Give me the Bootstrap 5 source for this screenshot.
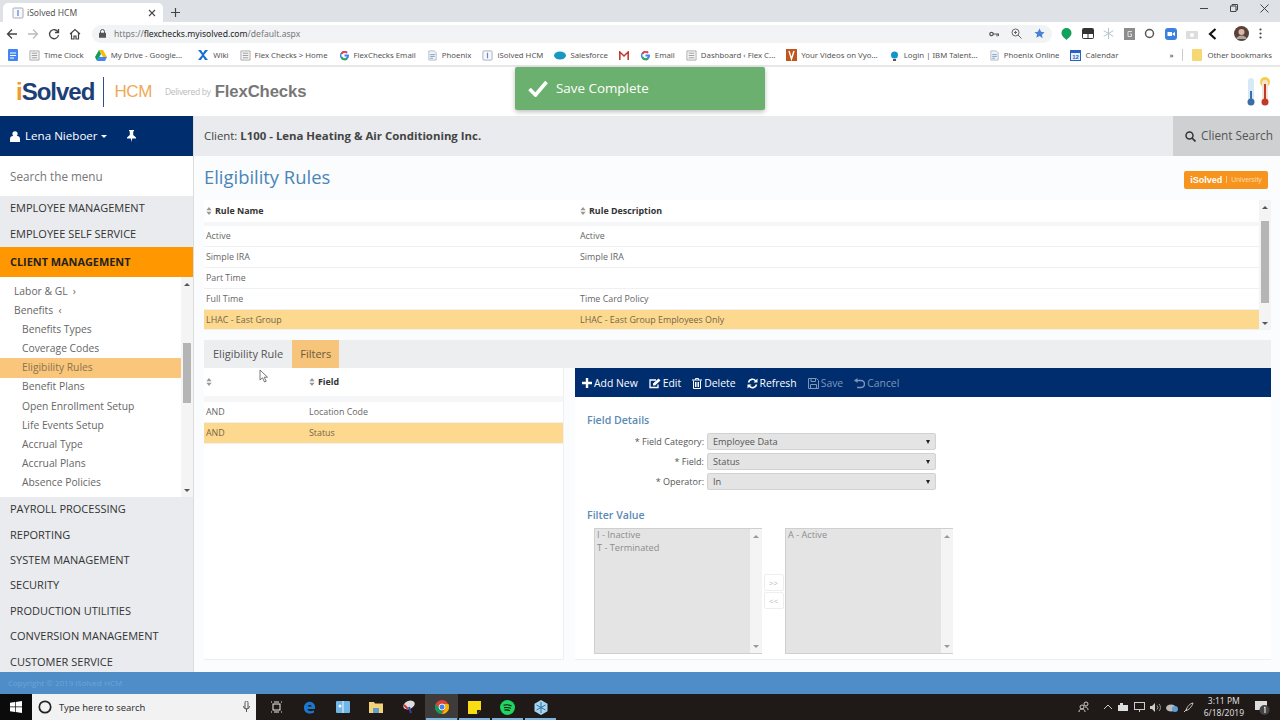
<!DOCTYPE html>
<html lang="en">
<head>
<meta charset="UTF-8">
<title>iSolved HCM</title>
<link href="https://cdn.jsdelivr.net/npm/bootstrap@5.3.3/dist/css/bootstrap.min.css" rel="stylesheet">
<style>
html, body { height: 720px; overflow: hidden; }
body { width: 1280px; font-family: "Open Sans", "Liberation Sans", sans-serif; color: #555; background: #fff; position: relative; }
svg { display: block; flex: none; }

/* browser chrome */
.tabstrip { height: 22px; background: #dee1e6; color: #444; font: 8.5px "Noto Sans", sans-serif; }
.br-tab { width: 160px; height: 19px; margin: 3px 0 0 3px; background: #fff; border-radius: 5px 5px 0 0; padding: 0 7px 0 9px; }
.br-tab .tab-name { margin-left: 3px; flex: 1; color: #555; }
.win-btns { gap: 22px; margin-left: auto; padding-right: 11px; margin-top: -6px; }
.toolbar { height: 23px; background: #fff; }
.nav-icons { width: 92px; padding-left: 6px; gap: 9px; }
.omnibox { width: 960px; height: 18px; background: #f1f3f4; border-radius: 9px; padding: 0 7px; font: 8.6px "Noto Sans", sans-serif; color: #777; }
.omnibox b { font-weight: 400; color: #222; }
.ext-icons { gap: 9.5px; padding-left: 9px; }
.bookmarks { height: 22px; background: #fff; border-bottom: 2px solid #e8e8e8; font: 7.8px "Noto Sans", sans-serif; color: #555; padding-left: 8px; gap: 11px; }
.bm { gap: 4px; white-space: nowrap; }
.bm-end { gap: 5px; }

/* app header */
.app-head { height: 49px; padding-left: 16px; background: #fff; }
.logo-i { font: 700 24px "Liberation Sans", sans-serif; letter-spacing: -1px; color: #1d3f78; }
.logo-i em { font-style: normal; color: #ee9b2a; }
.logo-rule { width: 1px; height: 30px; background: #2c4f86; margin: 0 10px 0 9px; }
.logo-hcm { font: 400 17px "Liberation Sans", sans-serif; color: #eea95a; letter-spacing: -.4px; }
.logo-by { font: 8.5px "Open Sans", sans-serif; color: #bbb; margin: 0 4px 0 13px; letter-spacing: -.3px; }
.logo-fc { font: 700 16.7px "Liberation Sans", sans-serif; color: #777; letter-spacing: -.1px; }
.toast-save { position: absolute; left: 515px; top: 67px; width: 250px; height: 43px; background: #6cb06f; color: #fff; font-size: 13.4px; padding-left: 12px; gap: 7px; border-radius: 2px; box-shadow: 0 2px 5px rgba(0,0,0,.25); z-index: 5; }
.cursor-arrow { position: absolute; left: 259px; top: 369px; z-index: 6; }

/* sidebar */
.app-body { height: 556px; overflow: hidden; }
.side { width: 194px; border-right: 1px solid #dcdcdc; background: #e9ebee; overflow: hidden; }
.side > * { flex-shrink: 0; }
.user-bar { height: 40px; background: #002d6e; color: #fff; font-size: 11.6px; padding-left: 10px; gap: 5px; }
.sc-caret { width: 0; height: 0; border-left: 3px solid transparent; border-right: 3px solid transparent; border-top: 3px solid #fff; margin-left: -2px; }
.pin-ic { margin-left: 15px; }
.side-search { height: 40px; background: #fff; color: #777; font-size: 11.7px; padding: 2px 0 0 10px; }
.menu-item { height: 25.4px; padding-left: 10px; font-size: 11px; color: #333; white-space: nowrap; }
.menu-open { height: 30px; background: #ff9800; color: #222; font-weight: 700; font-size: 10.9px; }
.sub-wrap { height: 220px; background: #fff; }
.sub-list { flex: 1; overflow: hidden; font-size: 10.3px; color: #666; }
.sub-inner { margin-top: -14px; }
.sub-row { height: 19.15px; padding-left: 14px; }
.sub-row.lvl2 { padding-left: 22px; }
.sub-row.on { background: #f9c67c; color: #8a7350; }
.bar-v { width: 12px; background: #f4f4f4; position: relative; flex-shrink: 0; }
.sc-up, .sc-dn { position: absolute; left: 3px; width: 0; height: 0; border-left: 3px solid transparent; border-right: 3px solid transparent; }
.sc-up { top: 6px; border-bottom: 3px solid #555; }
.sc-dn { bottom: 5px; border-top: 3px solid #555; }
.sc-thumb { position: absolute; left: 2px; right: 2px; background: #b5b5b5; }
.thumb-side { top: 66px; height: 60px; }
.thumb-grid { top: 21px; height: 82px; }

/* main */
.main-area { background: #fbfcfd; min-width: 0; }
.client-bar { height: 40px; background: #e9ebee; padding-left: 10px; font-size: 11.4px; color: #444; }
.client-search { width: 107px; height: 40px; margin-left: auto; background: #ced0d2; padding-left: 12px; gap: 5px; font-size: 11.8px; color: #555; }
.title-row { height: 44px; padding: 0 12px 2px 10px; }
.page-title { font-size: 18.4px; font-weight: 400; color: #4a85b8; margin: 0; }
.uni-btn { width: 84px; height: 18px; background: #f7941d; border-radius: 2px; color: #fff; font: 700 9px "Liberation Sans", sans-serif; gap: 4px; margin-top: 5px; }
.uni-btn span { font-weight: 400; font-size: 7px; color: #fbd9ac; border-left: 1px solid #fbc98a; padding-left: 4px; }
.grid-box { margin: 0 9px 0 10px; height: 130px; background: #fff; }
.grid-main { flex: 1; overflow: hidden; }
.grid-tbl { table-layout: fixed; width: 100%; margin: 0; font-size: 8.9px; color: #666; --bs-table-bg: transparent; }
.grid-tbl th { height: 22px; padding: 0 2px; color: #333; font-weight: 700; border: 0; vertical-align: middle; }
.grid-tbl td { height: 20.75px; padding: 0 2px; border-top: 0; border-bottom: 1px solid #eef0f2; vertical-align: middle; color: #666; }
.grid-tbl tr.spacer td { height: 4px; background: #f4f6f8; border: 0; }
.grid-tbl tr.sel td { background: #fdd98f; color: #75654a; }
.col-rule { width: 374px; }
.col-and { width: 103px; }
.sort-h { gap: 3px; }
.tab-strip { margin: 10px 9px 0 10px; height: 28px; background: #eceef0; font-size: 11px; color: #555; }
.tab-one { padding: 0 9px; line-height: 28px; }
.tab-two { padding: 0 8px; line-height: 28px; background: #f6c47a; color: #6d5b3e; }
.panes { margin: 0 9px 0 10px; height: 292px; gap: 11px; }
.pane-left { width: 360px; background: #fff; border-right: 1px solid #f0f0f0; border-bottom: 1px solid #eee; }
.grid-tbl .th-tall { height: 28px; }
.pane-left .grid-tbl tr.spacer td { height: 6px; }
.pane-right { flex: 1; background: #fff; border-bottom: 1px solid #eee; }
.act-bar { height: 29px; background: #002d6e; padding: 2px 0 0 7px; gap: 11px; font-size: 10.4px; color: #fff; }
.act { gap: 2px; }
.act.off { color: #7f96b9; }
.sec-head { font-size: 10.6px; font-weight: 600; color: #5b8ab5; padding-left: 12px; margin: 0; }
.sec-first { margin-top: 17px; margin-bottom: 5px; }
.sec-second { margin-top: 17px; margin-bottom: 0; }
.fld-row { height: 20px; }
.fld-lbl { width: 132px; text-align: right; font-size: 9px; color: #555; padding-right: 3px; }
.fld-sel { width: 229px; height: 17px; background: #e4e4e4; border: 1px solid #d2d2d2; border-radius: 2px; font-size: 9.2px; color: #555; padding: 0 5px; }
.fld-sel i { margin-left: auto; font-style: normal; width: 0; height: 0; border-left: 2.5px solid transparent; border-right: 2.5px solid transparent; border-top: 4px solid #222; }
.pick-row { padding-left: 19px; margin-top: 7px; }
.pick-box { width: 168px; height: 126px; background: #e4e4e4; border: 1px solid #cfcfcf; border-right: 0; font-size: 9.2px; color: #8d8d8d; }
.pick-box .sc-up { border-bottom-color: #999; }
.pick-box .sc-dn { border-top-color: #999; }
.pick-items { flex: 1; padding: 0 2px; line-height: 12.6px; }
.pick-mid { width: 23px; gap: 1px; }
.pick-btn { width: 20px; height: 17px; border: 1px solid #eee; border-radius: 2px; background: #fff; font-size: 8px; color: #bbb; line-height: 15px; text-align: center; }

/* footer, taskbar */
.app-foot { height: 22px; background: #4f8dc9; color: #6ea4d8; font-size: 8px; padding-left: 8px; }
.taskbar { height: 26px; background: #1f1a17; color: #ddd; }
.start-cell { width: 32px; height: 26px; background: #0b0b0b; }
.task-search { width: 224px; height: 26px; background: #f2f2f2; color: #333; font: 9.4px "Noto Sans", sans-serif; padding: 0 6px; gap: 7px; }
.task-apps { padding-left: 4px; }
.task-cell { width: 33px; height: 26px; position: relative; }
.task-cell.run::after { content: ""; position: absolute; left: 1px; right: 1px; bottom: 0; height: 2px; background: #7db3dc; }
.task-cell.now { background: #3e3c3a; }
.tray { margin-left: auto; gap: 5px; padding-right: 10px; }
.tray-time { font: 8.5px/12px "Noto Sans", sans-serif; text-align: center; color: #ddd; margin: 0 6px 0 5px; }
</style>
</head>
<body class="d-flex flex-column">

<svg width="0" height="0" class="position-absolute">
  <symbol id="sortv" viewBox="0 0 6 9"><path d="M3 0 6 3.600H0zM3 9 0 5.400h6z" fill="#999"/></symbol>
  <symbol id="page" viewBox="0 0 12 12"><path d="M1 1h10v10H1z" fill="#f4f4f4" stroke="#aaa"/><path d="M3 3.500h6M3 6h6M3 8.500h6" stroke="#999"/></symbol>
  <symbol id="isol" viewBox="0 0 12 12"><rect x="1" y="1" width="10" height="10" rx="1" fill="#f6f8fb" stroke="#aab"/><path d="M6 3v6" stroke="#68c" stroke-width="1.300"/></symbol>
  <symbol id="gg" viewBox="0 0 12 12"><path d="M10.600 5H6v2h2.600A3 3 0 1 1 8 3.700l1.400-1.400A5 5 0 1 0 11 6z" fill="#4285f4"/><path d="M2 3.200 3.800 4.600A3 3 0 0 1 8 3.700l1.400-1.400A5 5 0 0 0 2 3.200z" fill="#ea4335"/><path d="M1.600 8.400 3.600 7A3 3 0 0 0 8 8.800l1.500 1.300A5 5 0 0 1 1.600 8.400z" fill="#34a853"/></symbol>
  <symbol id="doc2" viewBox="0 0 12 12"><path d="M2 1h6l2 2v8H2z" fill="#eef2f7" stroke="#b5bcc5"/><path d="M3.500 5h5M3.500 7h5M3.500 9h3" stroke="#7ba0c8"/></symbol>
</svg>

<!-- browser tab strip -->
<div class="tabstrip d-flex align-items-start flex-shrink-0">
  <div class="br-tab d-flex align-items-center">
    <svg width="12" height="12"><use href="#isol"/></svg>
    <span class="tab-name">iSolved HCM</span>
    <svg width="8" height="8" viewBox="0 0 8 8"><path d="M1 1l6 6M7 1 1 7" stroke="#444" stroke-width="1.100"/></svg>
  </div>
  <svg class="ms-2 mt-2" width="9" height="9" viewBox="0 0 9 9"><path d="M4.500 0v9M0 4.500h9" stroke="#444" stroke-width="1.200"/></svg>
  <div class="win-btns d-flex align-items-center align-self-center">
    <svg width="8" height="8" viewBox="0 0 8 8"><path d="M0 4.500h8" stroke="#444"/></svg>
    <svg width="8" height="8" viewBox="0 0 8 8"><path d="M.5 2h5.500v5.500H.5zM2 2V.5h5.500V6H6" fill="none" stroke="#444"/></svg>
    <svg width="9" height="9" viewBox="0 0 9 9"><path d="M.5.5l8 8M8.500.5l-8 8" stroke="#444"/></svg>
  </div>
</div>

<!-- toolbar -->
<div class="toolbar d-flex align-items-center flex-shrink-0">
  <div class="nav-icons d-flex align-items-center">
    <svg width="12" height="12" viewBox="0 0 12 12"><path d="M11 6H1.500M6 1.500 1.500 6 6 10.500" fill="none" stroke="#444" stroke-width="1.300"/></svg>
    <svg width="12" height="12" viewBox="0 0 12 12"><path d="M1 6h9.500M6 1.500 10.500 6 6 10.500" fill="none" stroke="#bbb" stroke-width="1.300"/></svg>
    <svg width="12" height="12" viewBox="0 0 12 12"><path d="M10 4A4.500 4.500 0 1 0 10.500 7M10.500 1v3.500H7" fill="none" stroke="#444" stroke-width="1.300"/></svg>
    <svg width="12" height="12" viewBox="0 0 12 12"><path d="M1 6 6 1.500 11 6M2.500 5v6H5V8h2v3h2.500V5" fill="none" stroke="#444" stroke-width="1.200"/></svg>
  </div>
  <div class="omnibox d-flex align-items-center gap-2">
    <svg width="7" height="9" viewBox="0 0 7 9"><path d="M1.500 4V2.500a2 2 0 0 1 4 0V4" fill="none" stroke="#555"/><rect y="3.800" width="7" height="5" rx=".6" fill="#555"/></svg>
    <span>https://<b>flexchecks.myisolved.com</b>/default.aspx</span>
    <div class="ms-auto d-flex align-items-center gap-2">
      <svg width="10" height="6" viewBox="0 0 10 6"><circle cx="2.500" cy="3" r="1.700" fill="none" stroke="#555" stroke-width="1.200"/><path d="M4 3h6M8 3v2.500M9.500 3v2" stroke="#555"/></svg>
      <svg class="ms-1" width="11" height="11" viewBox="0 0 11 11"><circle cx="4.500" cy="4.500" r="3.500" fill="none" stroke="#666"/><path d="M7 7l3.500 3.500M3 4.500h3M4.500 3v3" stroke="#666"/></svg>
      <svg class="ms-1" width="11" height="11" viewBox="0 0 12 12"><path d="M6 .5l1.700 3.600 3.800.5-2.800 2.700.7 3.900L6 8.800l-3.400 1.900.7-3.900L.5 4.600l3.800-.5z" fill="#4a80d6"/></svg>
    </div>
  </div>
  <div class="ext-icons d-flex align-items-center">
    <svg width="11" height="12" viewBox="0 0 11 12"><path d="M5.500 0a5 5 0 0 1 5 5c0 3-2.500 4.500-5 7-2.500-2.500-5-4-5-7a5 5 0 0 1 5-5z" fill="#12a05c"/></svg>
    <svg width="12" height="11" viewBox="0 0 12 11"><rect width="12" height="11" rx="2" fill="#333"/><path d="M1 6h4.500v4H1zM6.500 6H11v4H6.500z" fill="#fff"/></svg>
    <svg width="11" height="11" viewBox="0 0 11 11"><path d="M5.500 0v11M.7 2.700l9.600 5.600M.7 8.300l9.600-5.600" stroke="#b8c3c9"/></svg>
    <svg width="11" height="12" viewBox="0 0 11 12"><rect width="11" height="12" fill="#8d8d8d"/><path d="M8 3.500H4v5h3.500V6H6" fill="none" stroke="#ddd"/></svg>
    <svg width="11" height="11" viewBox="0 0 11 11"><circle cx="5.500" cy="5.500" r="4" fill="#fff" stroke="#555" stroke-width="1.500"/></svg>
    <svg width="12" height="12" viewBox="0 0 12 12"><rect width="12" height="12" rx="3" fill="#3b82e0"/><path d="M2.500 4h4.500v4H2.500zM7.500 5.500 10 4v4L7.500 6.500z" fill="#fff"/></svg>
    <svg width="12" height="10" viewBox="0 0 12 10"><rect y="2" width="12" height="8" rx="1" fill="#ddd"/><circle cx="6" cy="6" r="2" fill="#fff"/></svg>
    <svg width="9" height="12" viewBox="0 0 9 12"><path d="M7.500 1 2 6l5.500 5" fill="none" stroke="#111" stroke-width="2.200"/></svg>
    <svg class="ms-2" width="15" height="15" viewBox="0 0 15 15"><circle cx="7.500" cy="7.500" r="7.500" fill="#5a4038"/><circle cx="7.500" cy="6" r="3" fill="#d9b9a6"/><path d="M2 13a6 6 0 0 1 11 0z" fill="#a8a8a8"/></svg>
    <svg width="3" height="11" viewBox="0 0 3 11"><circle cx="1.500" cy="1.500" r="1.100" fill="#444"/><circle cx="1.500" cy="5.500" r="1.100" fill="#444"/><circle cx="1.500" cy="9.500" r="1.100" fill="#444"/></svg>
  </div>
</div>

<!-- bookmarks bar -->
<div class="bookmarks d-flex align-items-center flex-shrink-0">
  <div class="bm d-flex align-items-center"><svg width="10" height="12" viewBox="0 0 10 12"><rect width="10" height="12" rx="1" fill="#4285f4"/><path d="M2 4h6M2 6.500h6M2 9h4" stroke="#fff"/></svg></div>
  <div class="bm d-flex align-items-center"><svg width="11" height="11"><use href="#page"/></svg>Time Clock</div>
  <div class="bm d-flex align-items-center"><svg width="12" height="11" viewBox="0 0 12 11"><path d="M4 0h4l4 7H8z" fill="#fbbc04"/><path d="M4 0 0 7l2 4 4-7z" fill="#0f9d58"/><path d="M2 11h8l2-4H4z" fill="#4285f4"/></svg>My Drive - Google...</div>
  <div class="bm d-flex align-items-center ms-1"><svg width="12" height="12" viewBox="0 0 12 12"><path d="M1 1l4 5-4 5h3l2-3 2 3h3L7 6l4-5H8L6 4 4 1z" fill="#1f6fd1"/></svg>Wiki</div>
  <div class="bm d-flex align-items-center"><svg width="11" height="11"><use href="#page"/></svg>Flex Checks &gt; Home</div>
  <div class="bm d-flex align-items-center"><svg width="11" height="11"><use href="#gg"/></svg>FlexChecks Email</div>
  <div class="bm d-flex align-items-center"><svg width="11" height="11"><use href="#doc2"/></svg>Phoenix</div>
  <div class="bm d-flex align-items-center"><svg width="11" height="11"><use href="#isol"/></svg>iSolved HCM</div>
  <div class="bm d-flex align-items-center"><svg width="12" height="9" viewBox="0 0 12 9"><ellipse cx="6" cy="4.500" rx="6" ry="4" fill="#1798c1"/></svg>Salesforce</div>
  <div class="bm d-flex align-items-center"><svg width="10" height="9" viewBox="0 0 10 9"><path d="M.8 9V1L5 5l4.200-4v8" fill="none" stroke="#c5392e" stroke-width="1.600"/></svg></div>
  <div class="bm d-flex align-items-center"><svg width="11" height="11"><use href="#gg"/></svg>Email</div>
  <div class="bm d-flex align-items-center"><svg width="11" height="11"><use href="#page"/></svg>Dashboard ‹ Flex C...</div>
  <div class="bm d-flex align-items-center"><svg width="11" height="12" viewBox="0 0 11 12"><rect width="11" height="12" fill="#c0561e"/><path d="M3 2l2.500 8L8 2" fill="none" stroke="#fff" stroke-width="1.400"/></svg>Your Videos on Vyo...</div>
  <div class="bm d-flex align-items-center"><svg width="11" height="13" viewBox="0 0 11 13"><circle cx="5.500" cy="6" r="3.500" fill="#1295c9"/><path d="M4 11h3" stroke="#222" stroke-width="1.500"/></svg>Login | IBM Talent...</div>
  <div class="bm d-flex align-items-center"><svg width="11" height="11"><use href="#doc2"/></svg>Phoenix Online</div>
  <div class="bm d-flex align-items-center"><svg width="11" height="11" viewBox="0 0 11 11"><rect width="11" height="11" fill="#2a5fc4"/><rect x="1" y="3" width="9" height="7" fill="#e9f0fb"/><text x="5.500" y="9" font-size="6" font-family="Liberation Sans" font-weight="700" text-anchor="middle" fill="#2a5fc4">12</text></svg>Calendar</div>
  <div class="bm-end d-flex align-items-center ms-auto pe-2">
    <span class="text-dark me-1">»</span>
    <svg width="1" height="12" viewBox="0 0 1 12"><path d="M.5 0v12" stroke="#ccc"/></svg>
    <svg class="ms-1" width="10" height="12" viewBox="0 0 10 12"><rect width="10" height="12" rx="1" fill="#f7d774"/></svg>
    <span>Other bookmarks</span>
  </div>
</div>

<!-- app header with logo -->
<div class="app-head d-flex align-items-center flex-shrink-0">
  <span class="logo-i"><em>i</em>Solved</span>
  <span class="logo-rule"></span>
  <span class="logo-hcm">HCM</span>
  <span class="logo-by">Delivered by</span>
  <span class="logo-fc">FlexChecks</span>
  <svg class="ms-auto me-2" width="28" height="34" viewBox="0 0 28 34">
    <rect x="4" y="3" width="6" height="24" rx="3" fill="#d7e9f5"/><rect x="6" y="16" width="2" height="11" fill="#3a6ea8"/><circle cx="7" cy="27" r="3.500" fill="#3a6ea8"/>
    <circle cx="21" cy="7" r="5" fill="#f4cf4c"/>
    <rect x="18" y="5" width="6" height="22" rx="3" fill="#f3e3d5"/><rect x="20" y="9" width="2" height="18" fill="#c0392b"/><circle cx="21" cy="27" r="3.500" fill="#c0392b"/>
  </svg>
</div>

<div class="toast-save d-flex align-items-center">
  <svg width="22" height="17" viewBox="0 0 21 17"><path d="M2 9l6 6L19 2" fill="none" stroke="#fff" stroke-width="3.600"/></svg>
  <span>Save Complete</span>
</div>

<svg class="cursor-arrow" width="10" height="14" viewBox="0 0 10 14"><path d="M1 1v10l2.500-2.200L5.500 13l1.700-.8-2-4H8.500z" fill="#fff" stroke="#555" stroke-width=".8"/></svg>

<div class="app-body d-flex flex-shrink-0">
  <!-- sidebar -->
  <div class="side d-flex flex-column flex-shrink-0">
    <div class="user-bar d-flex align-items-center">
      <svg width="10" height="11" viewBox="0 0 10 11"><circle cx="5" cy="2.800" r="2.600" fill="#fff"/><path d="M0 11V8a3 3 0 0 1 3-3h4a3 3 0 0 1 3 3v3z" fill="#fff"/></svg>
      <span>Lena Nieboer</span>
      <span class="d-inline-block sc-caret"></span>
      <svg class="pin-ic" width="9" height="12" viewBox="0 0 9 12"><path d="M2 0h5v1l-.8.6V5L9 7.500V8.500H5.200L4.500 12l-.7-3.500H0V7.500L2.800 5V1.600L2 1z" fill="#fff"/></svg>
    </div>
    <div class="side-search d-flex align-items-center">Search the menu</div>
    <div class="menu-item d-flex align-items-center">EMPLOYEE MANAGEMENT</div>
    <div class="menu-item d-flex align-items-center">EMPLOYEE SELF SERVICE</div>
    <div class="menu-item menu-open d-flex align-items-center">CLIENT MANAGEMENT</div>
    <div class="sub-wrap d-flex">
      <div class="sub-list">
        <div class="sub-inner">
          <div class="sub-row d-flex align-items-center">Tables</div>
          <div class="sub-row d-flex align-items-center">Labor &amp; GL &nbsp;›</div>
          <div class="sub-row d-flex align-items-center">Benefits &nbsp;‹</div>
          <div class="sub-row lvl2 d-flex align-items-center">Benefits Types</div>
          <div class="sub-row lvl2 d-flex align-items-center">Coverage Codes</div>
          <div class="sub-row lvl2 on d-flex align-items-center">Eligibility Rules</div>
          <div class="sub-row lvl2 d-flex align-items-center">Benefit Plans</div>
          <div class="sub-row lvl2 d-flex align-items-center">Open Enrollment Setup</div>
          <div class="sub-row lvl2 d-flex align-items-center">Life Events Setup</div>
          <div class="sub-row lvl2 d-flex align-items-center">Accrual Type</div>
          <div class="sub-row lvl2 d-flex align-items-center">Accrual Plans</div>
          <div class="sub-row lvl2 d-flex align-items-center">Absence Policies</div>
        </div>
      </div>
      <div class="bar-v"><span class="sc-up"></span><span class="sc-thumb thumb-side"></span><span class="sc-dn"></span></div>
    </div>
    <div class="menu-rest">
      <div class="menu-item d-flex align-items-center">PAYROLL PROCESSING</div>
      <div class="menu-item d-flex align-items-center">REPORTING</div>
      <div class="menu-item d-flex align-items-center">SYSTEM MANAGEMENT</div>
      <div class="menu-item d-flex align-items-center">SECURITY</div>
      <div class="menu-item d-flex align-items-center">PRODUCTION UTILITIES</div>
      <div class="menu-item d-flex align-items-center">CONVERSION MANAGEMENT</div>
      <div class="menu-item d-flex align-items-center">CUSTOMER SERVICE</div>
    </div>
  </div>

  <!-- main area -->
  <div class="main-area flex-grow-1 d-flex flex-column">
    <div class="client-bar d-flex align-items-center">
      <span>Client: <b>L100 - Lena Heating &amp; Air Conditioning Inc.</b></span>
      <div class="client-search d-flex align-items-center">
        <svg width="11" height="11" viewBox="0 0 11 11"><circle cx="4.500" cy="4.500" r="3.500" fill="none" stroke="#333" stroke-width="1.500"/><path d="M7 7l3.500 3.500" stroke="#333" stroke-width="1.700"/></svg>
        <span>Client Search</span>
      </div>
    </div>
    <div class="title-row d-flex align-items-center justify-content-between">
      <h1 class="page-title">Eligibility Rules</h1>
      <div class="uni-btn d-flex align-items-center justify-content-center">iSolved <span>University</span></div>
    </div>

    <div class="grid-box d-flex">
      <div class="grid-main">
        <table class="table grid-tbl">
          <colgroup><col class="col-rule"><col></colgroup>
          <thead><tr>
            <th><div class="sort-h d-flex align-items-center"><svg width="6" height="8"><use href="#sortv"/></svg>Rule Name</div></th>
            <th><div class="sort-h d-flex align-items-center"><svg width="6" height="8"><use href="#sortv"/></svg>Rule Description</div></th>
          </tr></thead>
          <tbody>
            <tr class="spacer"><td colspan="2"></td></tr>
            <tr><td>Active</td><td>Active</td></tr>
            <tr><td>Simple IRA</td><td>Simple IRA</td></tr>
            <tr><td>Part Time</td><td></td></tr>
            <tr><td>Full Time</td><td>Time Card Policy</td></tr>
            <tr class="sel"><td>LHAC - East Group</td><td>LHAC - East Group Employees Only</td></tr>
          </tbody>
        </table>
      </div>
      <div class="bar-v"><span class="sc-up"></span><span class="sc-thumb thumb-grid"></span><span class="sc-dn"></span></div>
    </div>

    <div class="tab-strip d-flex">
      <div class="tab-one">Eligibility Rule</div>
      <div class="tab-two">Filters</div>
    </div>

    <div class="panes d-flex">
      <div class="pane-left">
        <table class="table grid-tbl">
          <colgroup><col class="col-and"><col></colgroup>
          <thead><tr>
            <th class="th-tall"><svg width="6" height="8"><use href="#sortv"/></svg></th>
            <th class="th-tall"><div class="sort-h d-flex align-items-center"><svg width="6" height="8"><use href="#sortv"/></svg>Field</div></th>
          </tr></thead>
          <tbody>
            <tr class="spacer"><td colspan="2"></td></tr>
            <tr><td>AND</td><td>Location Code</td></tr>
            <tr class="sel"><td>AND</td><td>Status</td></tr>
          </tbody>
        </table>
      </div>
      <div class="pane-right">
        <div class="act-bar d-flex align-items-center">
          <span class="act d-flex align-items-center"><svg width="10" height="10" viewBox="0 0 10 10"><path d="M5 0v10M0 5h10" stroke="#fff" stroke-width="2.400"/></svg>Add New</span>
          <span class="act d-flex align-items-center"><svg width="12" height="11" viewBox="0 0 12 11"><path d="M9 6.500V9.500H1V2h6" fill="none" stroke="#fff" stroke-width="1.300"/><path d="M4 5.500 9.500.5 11.500 2.500 6 7.500H4z" fill="#fff"/></svg>Edit</span>
          <span class="act d-flex align-items-center"><svg width="10" height="11" viewBox="0 0 10 11"><path d="M0 2h10M3.500 2V.5h3V2M1.500 2.500v8h7v-8M3.500 4v5M5 4v5M6.500 4v5" fill="none" stroke="#fff"/></svg>Delete</span>
          <span class="act d-flex align-items-center"><svg width="11" height="11" viewBox="0 0 11 11"><path d="M1.500 4.500A4 4 0 0 1 8.700 3M9.500 6.500A4 4 0 0 1 2.300 8" fill="none" stroke="#fff" stroke-width="1.600"/><path d="M10.500.5v4H6.500zM.5 10.500v-4h4z" fill="#fff"/></svg>Refresh</span>
          <span class="act off d-flex align-items-center"><svg width="11" height="11" viewBox="0 0 11 11"><path d="M.5.5h8l2 2v8H.5zM3 .5v3h4.500v-3M2.500 10.500v-4h6v4" fill="none" stroke="#7f96b9"/></svg>Save</span>
          <span class="act off d-flex align-items-center"><svg width="11" height="11" viewBox="0 0 11 11"><path d="M2 2.500h5a3.200 3.200 0 0 1 0 7H3" fill="none" stroke="#7f96b9" stroke-width="1.500"/><path d="M3.500 0v5L0 2.500z" fill="#7f96b9"/></svg>Cancel</span>
        </div>
        <h2 class="sec-head sec-first">Field Details</h2>
        <div class="fld-list">
          <div class="fld-row d-flex align-items-center"><div class="fld-lbl">* Field Category:</div><div class="fld-sel d-flex align-items-center">Employee Data<i></i></div></div>
          <div class="fld-row d-flex align-items-center"><div class="fld-lbl">* Field:</div><div class="fld-sel d-flex align-items-center">Status<i></i></div></div>
          <div class="fld-row d-flex align-items-center"><div class="fld-lbl">* Operator:</div><div class="fld-sel d-flex align-items-center">In<i></i></div></div>
        </div>
        <h2 class="sec-head sec-second">Filter Value</h2>
        <div class="pick-row d-flex align-items-center">
          <div class="pick-box d-flex">
            <div class="pick-items">I - Inactive<br>T - Terminated</div>
            <div class="bar-v"><span class="sc-up"></span><span class="sc-dn"></span></div>
          </div>
          <div class="pick-mid d-flex flex-column align-items-center">
            <div class="pick-btn">&gt;&gt;</div>
            <div class="pick-btn">&lt;&lt;</div>
          </div>
          <div class="pick-box d-flex">
            <div class="pick-items">A - Active</div>
            <div class="bar-v"><span class="sc-up"></span><span class="sc-dn"></span></div>
          </div>
        </div>
      </div>
    </div>
  </div>
</div>

<div class="app-foot d-flex align-items-center flex-shrink-0">Copyright © 2019 iSolved HCM</div>

<!-- windows taskbar -->
<div class="taskbar d-flex align-items-center flex-shrink-0">
  <div class="start-cell d-flex align-items-center justify-content-center">
    <svg width="12" height="12" viewBox="0 0 12 12"><path d="M0 1.700 5 1v4.600H0zM5.700.9 12 0v5.600H5.700zM0 6.300h5V11L0 10.300zM5.700 6.300H12V12l-6.300-.9z" fill="#fff"/></svg>
  </div>
  <div class="task-search d-flex align-items-center">
    <svg width="14" height="14" viewBox="0 0 14 14"><circle cx="7" cy="7" r="5.700" fill="none" stroke="#222" stroke-width="1.700"/></svg>
    <span>Type here to search</span>
    <svg class="ms-auto" width="7" height="12" viewBox="0 0 7 12"><rect x="2" y="0" width="3" height="8" rx="1.500" fill="none" stroke="#555"/><path d="M.5 5a3 3 0 0 0 6 0M3.500 8v3" fill="none" stroke="#555"/></svg>
  </div>
  <div class="task-apps d-flex">
    <div class="task-cell d-flex align-items-center justify-content-center"><svg width="11" height="12" viewBox="0 0 11 12"><path d="M0 1h1M3 1h5M10 1h1M0 11h1M3 11h5M10 11h1" stroke="#eee"/><rect x="2" y="3" width="7" height="6" fill="none" stroke="#eee"/></svg></div>
    <div class="task-cell d-flex align-items-center justify-content-center"><svg width="13" height="13" viewBox="0 0 13 13"><path d="M1 7a5.500 5.500 0 0 1 11-1.500V8H4.500c.3 2.500 4 2.800 6.500 1.300v2.300C7 13.500 1 12.500 1 7zM4.500 5.600h4.300C8.600 3.500 5 3.500 4.500 5.600z" fill="#1b78d0"/></svg></div>
    <div class="task-cell d-flex align-items-center justify-content-center"><svg width="14" height="12" viewBox="0 0 14 12"><rect width="14" height="12" rx="1" fill="#70b6e6"/><path d="M7 0v12" stroke="#e7f4fc"/><circle cx="4" cy="5" r="1.500" fill="#fff"/></svg></div>
    <div class="task-cell d-flex align-items-center justify-content-center"><svg width="14" height="12" viewBox="0 0 14 12"><path d="M0 1h5l1 1.500h8V12H0z" fill="#f3d27a"/><path d="M4 7h6v5H4z" fill="#5f9fc9"/></svg></div>
    <div class="task-cell d-flex align-items-center justify-content-center"><svg width="15" height="14" viewBox="0 0 15 14"><ellipse cx="8" cy="5" rx="6" ry="4" fill="#ddd" transform="rotate(-25 8 5)"/><path d="M3 5 7 9" stroke="#c33" stroke-width="2"/><path d="M8 7l2 6" stroke="#34a" stroke-width="2"/></svg></div>
    <div class="task-cell now run d-flex align-items-center justify-content-center"><svg width="14" height="14" viewBox="0 0 14 14"><circle cx="7" cy="7" r="7" fill="#db4437"/><path d="M7 14a7 7 0 0 1-6.500-9.800L4 8l3 2.500z" fill="#0f9d58"/><path d="M7 4h6.400A7 7 0 0 1 7 14l3-5z" fill="#f4b400"/><circle cx="7" cy="7" r="3" fill="#4285f4" stroke="#eee"/></svg></div>
    <div class="task-cell run d-flex align-items-center justify-content-center"><svg width="13" height="13" viewBox="0 0 13 13"><path d="M0 0h13v9l-4 4H0z" fill="#f9dc14"/><path d="M9 13V9h4z" fill="#222"/></svg></div>
    <div class="task-cell run d-flex align-items-center justify-content-center"><svg width="15" height="15" viewBox="0 0 15 15"><circle cx="7.500" cy="7.500" r="7.500" fill="#1ed760"/><path d="M3.500 5.300c2.800-.8 5.500-.6 8 .7M4 7.800c2.300-.6 4.700-.4 6.800.7M4.500 10.100c1.900-.5 3.700-.3 5.400.6" fill="none" stroke="#111" stroke-width="1.100"/></svg></div>
    <div class="task-cell run d-flex align-items-center justify-content-center"><svg width="14" height="15" viewBox="0 0 14 15"><path d="M7 0l6.500 3.700v7.600L7 15 .5 11.300V3.700z" fill="#a8d6ee"/><path d="M7 2v11M2.500 5l9 5M11.500 5l-9 5" stroke="#2a6f9e"/></svg></div>
  </div>
  <div class="tray d-flex align-items-center">
    <svg width="12" height="12" viewBox="0 0 12 12"><circle cx="4" cy="6" r="2" fill="none" stroke="#ccc"/><circle cx="8" cy="3" r="2" fill="none" stroke="#ccc"/><path d="M1 11c0-2 1-3 3-3s3 1 3 3M7 6c2 0 3 1 3 3" fill="none" stroke="#ccc"/></svg>
    <svg class="ms-2" width="10" height="6" viewBox="0 0 10 6"><path d="M1 5l4-4 4 4" fill="none" stroke="#ccc"/></svg>
    <svg width="11" height="8" viewBox="0 0 11 8"><rect y="2" width="10" height="6" fill="#ddd"/><rect x="2" width="3" height="2" fill="#ddd"/></svg>
    <svg width="11" height="10" viewBox="0 0 11 10"><rect x=".5" y=".5" width="10" height="7" fill="none" stroke="#ccc"/><path d="M5.500 8v2" stroke="#ccc"/></svg>
    <svg width="11" height="9" viewBox="0 0 11 9"><path d="M0 3h2l3-3v9L2 6H0z" fill="#ccc"/><path d="M7 2.500a3 3 0 0 1 0 4M9 1a5 5 0 0 1 0 7" fill="none" stroke="#999"/></svg>
    <svg width="12" height="9" viewBox="0 0 12 9"><ellipse cx="5" cy="5" rx="5" ry="3.500" fill="#bbb"/><circle cx="9" cy="6" r="3" fill="#5a9fd6"/></svg>
    <svg width="11" height="11" viewBox="0 0 11 11"><path d="M1 10 4 7M3 8.500c3-.5 6-4 7-7.500-3 .5-6 3.500-7 7.500z" fill="none" stroke="#ccc"/></svg>
    <div class="tray-time">3:11 PM<br>6/18/2019</div>
    <svg width="15" height="15" viewBox="0 0 15 15"><path d="M0 1h12v9H0z" fill="#ddd"/><circle cx="9.500" cy="10" r="5" fill="#444"/><path d="M9 7.500l1-.5v6" fill="none" stroke="#fff"/></svg>
  </div>
</div>

</body>
</html>
